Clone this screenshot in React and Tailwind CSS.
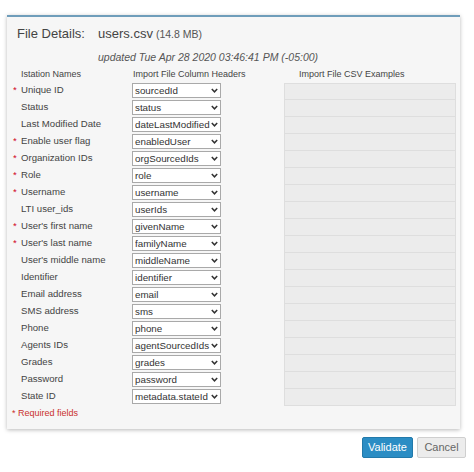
import React from "react";

const rows = [
  { label: "Unique ID", value: "sourcedId", req: true },
  { label: "Status", value: "status" },
  { label: "Last Modified Date", value: "dateLastModified" },
  { label: "Enable user flag", value: "enabledUser", req: true },
  { label: "Organization IDs", value: "orgSourcedIds", req: true },
  { label: "Role", value: "role", req: true },
  { label: "Username", value: "username", req: true },
  { label: "LTI user_ids", value: "userIds" },
  { label: "User's first name", value: "givenName", req: true },
  { label: "User's last name", value: "familyName", req: true },
  { label: "User's middle name", value: "middleName" },
  { label: "Identifier", value: "identifier" },
  { label: "Email address", value: "email" },
  { label: "SMS address", value: "sms" },
  { label: "Phone", value: "phone" },
  { label: "Agents IDs", value: "agentSourcedIds" },
  { label: "Grades", value: "grades" },
  { label: "Password", value: "password" },
  { label: "State ID", value: "metadata.stateId" },
];

function Chevron() {
  return (
    <svg width="7" height="5" viewBox="0 0 7 5" className="shrink-0">
      <path d="M0.8 1 L3.5 3.8 L6.2 1" fill="none" stroke="#333" strokeWidth="1.5" />
    </svg>
  );
}

function FakeSelect({ value }) {
  return (
    <div className="flex items-center w-[89px] h-[15px] bg-white border border-[#a9a9a9] pl-[2px] pr-[2px]">
      <span className="flex-1 min-w-0 overflow-hidden whitespace-nowrap text-[9.8px] leading-[13px] text-[#333]">
        {value}
      </span>
      <Chevron />
    </div>
  );
}

export default function App() {
  return (
    <div
      className="w-[474px] h-[472px] bg-white pt-[15px] pl-[7px] pr-[11px]"
      style={{ fontFamily: '"Liberation Sans", Arial, sans-serif' }}
    >
      <div className="w-[453px] bg-[#f6f6f6] border-t-2 border-[#6f9dba] shadow-[0_1px_4px_rgba(0,0,0,0.28)] pt-[7px] pb-[10px]">
        {/* title */}
        <div className="flex items-baseline h-[20px] leading-[20px] pl-[10px] text-[#444]">
          <span className="w-[81px] text-[13px]">File Details:</span>
          <span className="text-[13px]">users.csv</span>
          <span className="text-[10.5px] ml-[3px] text-[#555]">(14.8 MB)</span>
        </div>
        <div className="mt-[6px] pl-[91px] h-[14px] leading-[14px] italic text-[10.5px] text-[#555]">
          updated Tue Apr 28 2020 03:46:41 PM (-05:00)
        </div>

        {/* header */}
        <div className="flex mt-[4px] h-[12px] leading-[12px] text-[9px] text-[#444]">
          <span className="w-[126px] pl-[14px]">Istation Names</span>
          <span className="w-[166px]">Import File Column Headers</span>
          <span>Import File CSV Examples</span>
        </div>

        {/* rows */}
        <div className="mt-[3px]">
          {rows.map((r, i) => (
            <div key={r.label} className="flex h-[17px]">
              <div className="flex items-center w-[125px] h-[15px] pl-[6px] text-[9.6px] text-[#444]">
                <span className="w-[8px] text-[#d0021b]">{r.req ? "*" : ""}</span>
                <span>{r.label}</span>
              </div>
              <FakeSelect value={r.value} />
              <div className="w-[63px]" />
              <div
                className={
                  "w-[172px] h-[17px] bg-[#ececec] border-x border-[#dedede] border-b " +
                  (i === 0 ? "border-t" : "")
                }
              />
            </div>
          ))}
        </div>

        <div className="mt-[1px] pl-[5px] h-[12px] leading-[12px] text-[9px] text-[#c9302c]">
          * Required fields
        </div>
      </div>

      {/* buttons */}
      <div className="flex justify-end gap-[4px] mt-[8px] -mr-[3px]">
        <button className="w-[51px] h-[21px] bg-[#2b8dc4] border border-[#2279aa] rounded-[2px] text-white text-[11px]">
          Validate
        </button>
        <button className="w-[49px] h-[21px] bg-[#ececec] border border-[#cfcfcf] rounded-[2px] text-[#666] text-[11px]">
          Cancel
        </button>
      </div>
    </div>
  );
}
